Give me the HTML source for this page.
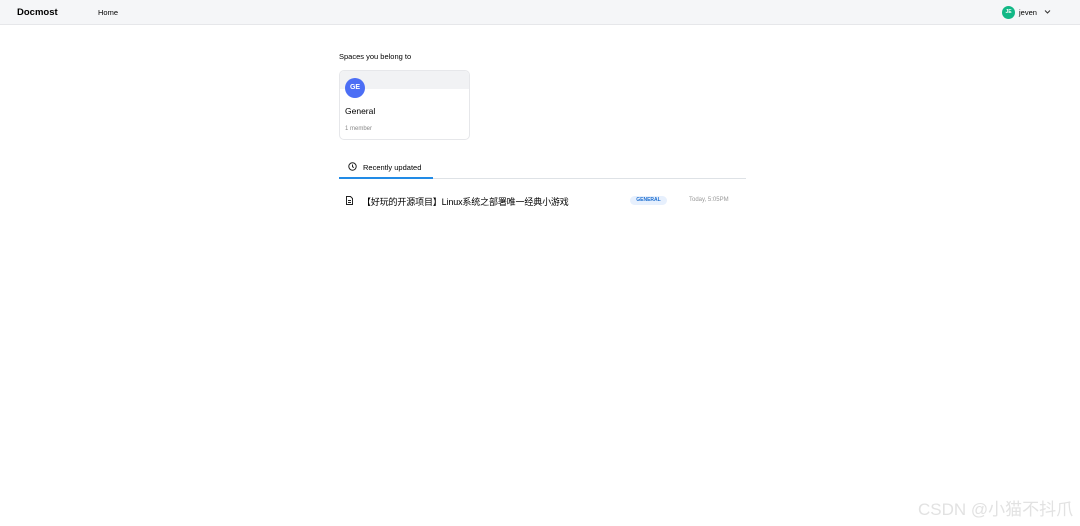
<!DOCTYPE html>
<html><head><meta charset="utf-8"><style>
body{margin:0;width:1080px;height:526px;background:#fff;font-family:"Liberation Sans","Noto Sans CJK SC",sans-serif;position:relative;overflow:hidden;color:#000}
.hdr{position:absolute;left:0;top:0;width:1080px;height:24px;background:#f5f6f8;border-bottom:1px solid #e6e7ea}
.a{position:absolute;white-space:nowrap}
</style></head><body>
<div class="hdr"></div>
<div class="a" style="left:17px;top:7px;font-size:9.5px;font-weight:bold">Docmost</div>
<div class="a" style="left:98px;top:8px;font-size:7.5px">Home</div>
<div class="a" style="left:1002px;top:6px;width:13px;height:13px;border-radius:50%;background:#12b886;color:#fff;font-size:5px;font-weight:bold;text-align:center;line-height:13px">JE</div>
<div class="a" style="left:1019px;top:8px;font-size:7.5px">jeven</div>
<svg class="a" style="left:1044px;top:9px" width="7" height="6" viewBox="0 0 7 6"><path d="M1 1.5 3.5 4 6 1.5" stroke="#333" fill="none" stroke-width="1"/></svg>
<div class="a" style="left:339px;top:52px;font-size:7.5px">Spaces you belong to</div>
<div class="a" style="left:339px;top:70px;width:129px;height:68px;border:1px solid #e6e7ea;border-radius:5px;overflow:hidden">
<div style="height:18px;background:#f1f2f4"></div></div>
<div class="a" style="left:345px;top:78px;width:20px;height:20px;border-radius:50%;background:#4c6ef5;color:#fff;font-size:7px;font-weight:bold;text-align:center;line-height:20px">GE</div>
<div class="a" style="left:345px;top:106px;font-size:8.5px">General</div>
<div class="a" style="left:345px;top:126px;font-size:6px;color:#888">1 member</div>
<svg class="a" style="left:348px;top:162px" width="9" height="9" viewBox="0 0 9 9"><circle cx="4.5" cy="4.5" r="3.7" stroke="#222" fill="none" stroke-width="1"/><path d="M4.5 2.5V4.7L5.8 5.6" stroke="#222" fill="none" stroke-width="1"/></svg>
<div class="a" style="left:363px;top:163px;font-size:7.5px">Recently updated</div>
<div class="a" style="left:339px;top:178px;width:407px;height:1px;background:#dee2e6"></div>
<div class="a" style="left:339px;top:177px;width:94px;height:2px;background:#228be6"></div>
<svg class="a" style="left:346px;top:196px" width="7" height="9" viewBox="0 0 7 9"><path d="M.5.5H4.5L6.5 2.5V8.5H.5Z M2 4.5H5M2 6.5H5" stroke="#222" fill="none" stroke-width="1"/></svg>
<div class="a" style="left:362px;top:195px;font-size:9px;letter-spacing:-0.15px">【好玩的开源项目】Linux系统之部署唯一经典小游戏</div>
<div class="a" style="left:630px;top:196px;width:37px;height:9px;border-radius:5px;background:#e7f0fd;color:#1c6ed0;font-size:5px;font-weight:bold;text-align:center;line-height:9px">GENERAL</div>
<div class="a" style="left:689px;top:197px;font-size:6px;color:#999">Today, 5:05PM</div>
<div class="a" style="left:918px;top:495px;font-size:17px;color:#e2e2e2">CSDN @小猫不抖爪</div>
</body></html>
